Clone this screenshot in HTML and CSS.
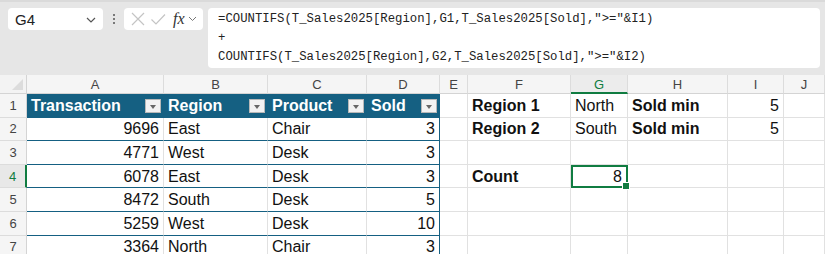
FILE: index.html
```html
<!DOCTYPE html>
<html>
<head>
<meta charset="utf-8">
<link rel="stylesheet" href="styles.css">
</head>
<body>
<div class="app">
  <div class="fbar">
    <div class="namebox">
      <span class="nb-text">G4</span>
      <svg class="chev" width="10" height="6" viewBox="0 0 10 6"><path d="M1 1 L5 5 L9 1" fill="none" stroke="#555" stroke-width="1.2"/></svg>
    </div>
    <div class="dots"><span></span><span></span><span></span></div>
    <div class="fxbox">
      <svg width="16" height="16" viewBox="0 0 16 16"><path d="M2 2 L14 14 M14 2 L2 14" stroke="#c4c4c4" stroke-width="1.2" fill="none"/></svg>
      <svg width="16" height="16" viewBox="0 0 16 16"><path d="M1.5 8.5 L6 13 L15 3.5" stroke="#c4c4c4" stroke-width="1.2" fill="none"/></svg>
      <span class="fx">fx</span>
      <svg width="9" height="6" viewBox="0 0 9 6"><path d="M1 1 L4.5 4.5 L8 1" fill="none" stroke="#777" stroke-width="1"/></svg>
    </div>
    <div class="formula">
      <div class="fl">=COUNTIFS(T_Sales2025[Region],G1,T_Sales2025[Sold],"&gt;="&amp;I1)</div>
      <div class="fl">+</div>
      <div class="fl">COUNTIFS(T_Sales2025[Region],G2,T_Sales2025[Sold],"&gt;="&amp;I2)</div>
    </div>
  </div>

  <div class="sheet">
    <div class="corner"></div>
    <div class="ch">A</div><div class="ch">B</div><div class="ch">C</div><div class="ch">D</div><div class="ch">E</div><div class="ch">F</div><div class="ch sel">G</div><div class="ch">H</div><div class="ch">I</div><div class="ch">J</div>

    <div class="rh">1</div>
    <div class="c th">Transaction<span class="flt"></span></div>
    <div class="c th">Region<span class="flt"></span></div>
    <div class="c th">Product<span class="flt"></span></div>
    <div class="c th">Sold<span class="flt"></span></div>
    <div class="c"></div>
    <div class="c b">Region 1</div>
    <div class="c">North</div>
    <div class="c b">Sold min</div>
    <div class="c r">5</div>
    <div class="c"></div>

    <div class="rh">2</div>
    <div class="c t r">9696</div><div class="c t">East</div><div class="c t">Chair</div><div class="c t tl r">3</div>
    <div class="c"></div>
    <div class="c b">Region 2</div>
    <div class="c">South</div>
    <div class="c b">Sold min</div>
    <div class="c r">5</div>
    <div class="c"></div>

    <div class="rh">3</div>
    <div class="c t r">4771</div><div class="c t">West</div><div class="c t">Desk</div><div class="c t tl r">3</div>
    <div class="c"></div><div class="c"></div><div class="c"></div><div class="c"></div><div class="c"></div><div class="c"></div>

    <div class="rh sel">4</div>
    <div class="c t r">6078</div><div class="c t">East</div><div class="c t">Desk</div><div class="c t tl r">3</div>
    <div class="c"></div>
    <div class="c b">Count</div>
    <div class="c r active">8</div>
    <div class="c"></div><div class="c"></div><div class="c"></div>

    <div class="rh">5</div>
    <div class="c t r">8472</div><div class="c t">South</div><div class="c t">Desk</div><div class="c t tl r">5</div>
    <div class="c"></div><div class="c"></div><div class="c"></div><div class="c"></div><div class="c"></div><div class="c"></div>

    <div class="rh">6</div>
    <div class="c t r">5259</div><div class="c t">West</div><div class="c t">Desk</div><div class="c t tl r">10</div>
    <div class="c"></div><div class="c"></div><div class="c"></div><div class="c"></div><div class="c"></div><div class="c"></div>

    <div class="rh">7</div>
    <div class="c t r">3364</div><div class="c t">North</div><div class="c t">Chair</div><div class="c t tl r">3</div>
    <div class="c"></div><div class="c"></div><div class="c"></div><div class="c"></div><div class="c"></div><div class="c"></div>
  </div>
</div>
</body>
</html>
```

FILE: styles.css
```css
* { box-sizing: border-box; }
html, body { margin: 0; padding: 0; }
body {
  width: 825px;
  height: 254px;
  overflow: hidden;
  background: #ffffff;
  font-family: "Liberation Sans", Arial, sans-serif;
}
.app { display: flex; flex-direction: column; }

.fbar {
  background: #e6e6e6;
  border-top: 2px solid #dadada;
  height: 75px;
  padding: 6px 5px 0 8px;
  display: flex;
  align-items: flex-start;
}
.namebox {
  width: 95px;
  height: 22px;
  background: #fff;
  border-radius: 4px;
  display: flex;
  align-items: center;
  justify-content: space-between;
  padding: 0 7px 0 7px;
}
.nb-text { font-size: 15px; color: #222; }
.chev { margin-top: 1px; }
.dots {
  width: 21px;
  height: 22px;
  display: flex;
  flex-direction: column;
  align-items: center;
  justify-content: center;
  gap: 2px;
}
.dots span { width: 2px; height: 2px; background: #555; border-radius: 1px; }
.fxbox {
  width: 79px;
  height: 22px;
  background: #fff;
  border-radius: 4px;
  display: flex;
  align-items: center;
  padding: 0 3px 0 6px;
}
.fxbox svg:nth-child(1) { margin-right: 4px; }
.fxbox svg:nth-child(2) { margin-right: 7px; }
.fx {
  font-family: "Liberation Serif", "Times New Roman", serif;
  font-style: italic;
  font-size: 16px;
  color: #333;
  margin-right: 3px;
}
.formula {
  margin-left: 5px;
  flex: 1;
  height: 60px;
  background: #fff;
  border-radius: 4px;
  padding: 2px 10px;
  font-family: "Liberation Mono", "DejaVu Sans Mono", monospace;
  font-size: 12.3px;
  line-height: 19px;
  color: #222;
}
.fl { white-space: nowrap; }

.sheet {
  display: grid;
  grid-template-columns: 27px 137px 104px 99px 73px 28px 103px 57px 100px 56px 41px;
  grid-template-rows: 19px repeat(7, 23.6px);
  font-size: 16px;
  color: #111;
}
.corner {
  background: #f3f3f3;
  border-right: 1px solid #d4d4d4;
  border-bottom: 1px solid #d4d4d4;
  position: relative;
}
.corner::after {
  content: "";
  position: absolute;
  right: 3px;
  bottom: 3px;
  width: 0; height: 0;
  border-left: 11px solid transparent;
  border-bottom: 11px solid #dcdcdc;
}
.ch {
  background: #f5f5f5;
  border-right: 1px solid #dcdcdc;
  border-bottom: 1px solid #d4d4d4;
  font-size: 13px;
  color: #444;
  display: flex;
  align-items: center;
  justify-content: center;
  padding-top: 1px;
}
.ch.sel {
  color: #107c41;
  background: #ececec;
  border-bottom: 2px solid #107c41;
}
.rh {
  background: #f5f5f5;
  border-right: 1px solid #d4d4d4;
  border-bottom: 1px solid #dcdcdc;
  font-size: 13px;
  color: #444;
  display: flex;
  align-items: center;
  justify-content: center;
}
.rh.sel {
  color: #107c41;
  background: #e8e8e8;
  border-right: 2px solid #107c41;
}
.c {
  border-right: 1px solid #e1e1e1;
  border-bottom: 1px solid #e1e1e1;
  display: flex;
  align-items: center;
  padding: 1px 4px 0 4px;
  white-space: nowrap;
  position: relative;
}
.c.r { justify-content: flex-end; }
.c.b { font-weight: bold; }
.c.t { border-bottom: 1px solid #156082; }
.c.tl { border-right: 1px solid #156082; }
.c.th {
  background: #156082;
  color: #fff;
  font-weight: bold;
  border-right: 1px solid #156082;
  border-bottom: 1px solid #156082;
  justify-content: space-between;
  padding-right: 2px;
}
.flt {
  width: 16px;
  height: 14px;
  background: #f2f2f2;
  border: 1px solid #b8b8b8;
  position: relative;
  flex: none;
}
.flt::after {
  content: "";
  position: absolute;
  left: 4px;
  top: 5px;
  border-left: 3.5px solid transparent;
  border-right: 3.5px solid transparent;
  border-top: 4px solid #666;
}
.c.active {
  border: 2px solid #107c41;
  padding-right: 4px;
}
.c.active::after {
  content: "";
  position: absolute;
  right: -4px;
  bottom: -4px;
  width: 6px;
  height: 6px;
  background: #107c41;
  border: 1px solid #fff;
  z-index: 2;
}
```
